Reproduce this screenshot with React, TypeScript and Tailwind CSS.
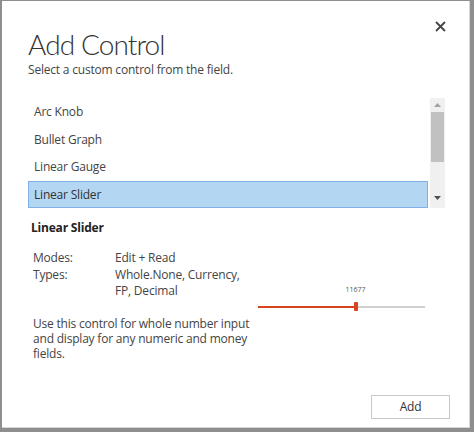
import React from 'react';

const items = ['Arc Knob', 'Bullet Graph', 'Linear Gauge', 'Linear Slider'];

export default function App() {
    const selected = 'Linear Slider';
    const min = 0;
    const max = 20000;
    const value = 11677;
    const pct = ((value - min) / (max - min)) * 100;

    return (
        <div
            className="w-[474px] h-[432px] bg-[#8e8e8e] pl-[2px] pr-[4px] pb-[4px] pt-[1px] text-[#333] tracking-[-0.2px]"
            style={{ fontFamily: '"Open Sans", "Segoe UI", sans-serif' }}
        >
            <div className="relative h-full bg-white border-r border-b border-[#d6d6d6] flex flex-col">
                {/* Close button */}
                <button className="absolute right-[22px] top-[18px] w-[14px] h-[14px] flex items-center justify-center text-[#444]">
                    <svg width="11" height="11" viewBox="0 0 11 11" fill="none" stroke="currentColor" strokeWidth="1.8">
                        <path d="M1 1L10 10M10 1L1 10" />
                    </svg>
                </button>

                {/* Header */}
                <div className="pl-[26px] pt-[26px]">
                    <h1
                        className="text-[28px] leading-[34px] font-light text-[#333] tracking-[-0.9px]"
                        style={{ fontFamily: 'Lato, "Open Sans", sans-serif' }}
                    >
                        Add Control
                    </h1>
                    <p className="text-[12px] leading-[16px] text-[#444] mt-[1px]">Select a custom control from the field.</p>
                </div>

                {/* List box */}
                <div className="ml-[26px] mr-[24px] mt-[20px] h-[110px] flex">
                    <div className="flex-1 flex flex-col justify-end">
                        {items.map((item) => (
                            <div
                                key={item}
                                className={
                                    item === selected
                                        ? 'h-[27px] flex items-center pl-[5px] text-[12px] text-[#333] bg-[#b3d6f2] border border-[#7fb0e6]'
                                        : 'h-[28px] flex items-center pl-[6px] text-[12px] text-[#444]'
                                }
                            >
                                {item}
                            </div>
                        ))}
                    </div>
                    {/* Scrollbar */}
                    <div className="w-[15px] ml-[2px] bg-[#f0f0f0] flex flex-col items-center">
                        <div className="h-[14px] flex items-center justify-center">
                            <svg width="7" height="4" viewBox="0 0 7 4"><path d="M0 4L3.5 0L7 4Z" fill="#a3a3a3" /></svg>
                        </div>
                        <div className="w-[13px] h-[50px] bg-[#c1c1c1]" />
                        <div className="flex-1" />
                        <div className="h-[20px] flex items-center justify-center">
                            <svg width="7" height="4" viewBox="0 0 7 4"><path d="M0 0L7 0L3.5 4Z" fill="#505050" /></svg>
                        </div>
                    </div>
                </div>

                {/* Details */}
                <div className="pl-[29px] pr-[44px] mt-[12px]">
                    <h2 className="text-[12px] font-bold text-[#222] leading-[16px]">Linear Slider</h2>
                    <div className="flex mt-[14px]">
                        <div className="w-[229px] text-[12px] text-[#444] leading-[16px]">
                            <div className="flex pl-[2px]">
                                <span className="w-[82px]">Modes:</span>
                                <span>Edit + Read</span>
                            </div>
                            <div className="flex pl-[2px] mt-[1px]">
                                <div className="w-[82px] shrink-0">Types:</div>
                                <div>
                                    <div>Whole.None, Currency,</div>
                                    <div>FP, Decimal</div>
                                </div>
                            </div>
                            <p className="pl-[2px] mt-[17px] leading-[15px]">
                                Use this control for whole number input and display for any numeric and money fields.
                            </p>
                        </div>
                        <div className="flex-1 pt-[35px] pl-[3px]">
                            <div className="relative w-[167px] h-[28px]">
                                <span
                                    className="absolute -translate-x-1/2 top-0 text-[7px] leading-[10px] text-[#555] tracking-normal"
                                    style={{ left: `${pct}%` }}
                                >
                                    {value}
                                </span>
                                <div className="absolute left-0 right-0 top-[21px] h-[2px] bg-[#d0d0d0]" />
                                <div className="absolute left-0 top-[21px] h-[2px] bg-[#d9431e]" style={{ width: `${pct}%` }} />
                                <div
                                    className="absolute top-[17px] w-[4px] h-[9px] rounded-[1px] bg-[#d9431e] -translate-x-1/2"
                                    style={{ left: `${pct}%` }}
                                />
                            </div>
                        </div>
                    </div>
                </div>

                <div className="flex-1" />

                {/* Footer */}
                <div className="flex justify-end pr-[19px] pb-[8px]">
                    <button className="w-[79px] h-[24px] border border-[#c8c8c8] text-[12px] text-[#333] bg-white">Add</button>
                </div>
            </div>
        </div>
    );
}
